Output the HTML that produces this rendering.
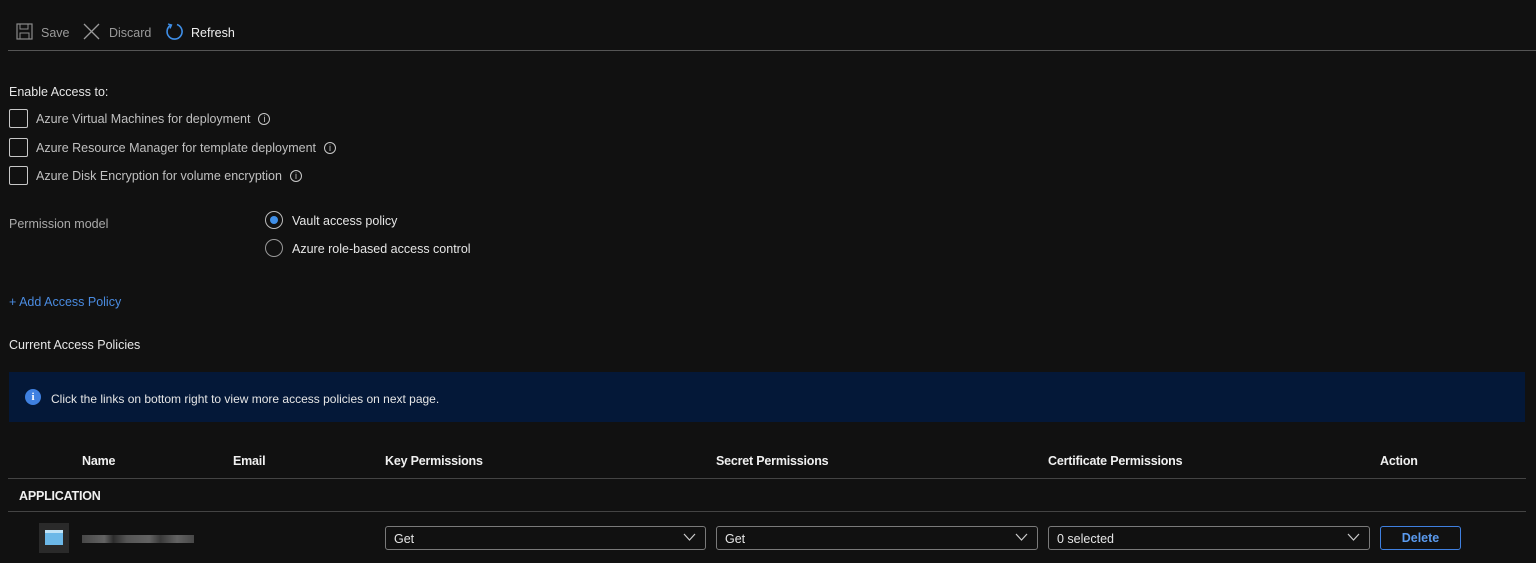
<!DOCTYPE html>
<html><head><meta charset="utf-8"><style>
*{margin:0;padding:0;box-sizing:border-box}
body{width:1536px;height:563px;background:#111111;font-family:"Liberation Sans",sans-serif;color:#e6e6e6;font-size:12.5px;position:relative;overflow:hidden}
.a{position:absolute;white-space:nowrap}
.cb{position:absolute;left:9px;width:19px;height:19px;border:1px solid #c8c8c8;border-radius:2px}
.lbl{color:#c0c0c0}
.th{font-weight:bold;color:#f0f0f0;font-size:12.5px;letter-spacing:-0.2px}
.dd{position:absolute;top:526px;height:24px;border:1px solid #7a7a7a;border-radius:3px;padding:5px 8px;font-size:12.5px;color:#e6e6e6}
.dd svg{position:absolute;right:9px;top:6px}
.info{display:inline-block;width:12px;height:12px;border:1px solid #c8c8c8;border-radius:50%;vertical-align:middle;margin-left:8px;position:relative;top:-1px;font-size:9px;text-align:center;line-height:10px;color:#c8c8c8}
</style></head><body>
<svg class="a" style="left:16px;top:23px" width="17" height="17" viewBox="0 0 17 17"><rect x="1" y="1" width="15" height="15" fill="none" stroke="#8a8a8a" stroke-width="1.2"/><rect x="4" y="1" width="8" height="5" fill="none" stroke="#8a8a8a"/><rect x="4" y="10" width="9" height="6" fill="none" stroke="#8a8a8a"/></svg>
<div class="a" style="left:41px;top:26px;color:#9a9a9a">Save</div>
<svg class="a" style="left:83px;top:23px" width="17" height="17"><path d="M1 1L16 16M16 1L1 16" stroke="#9a9a9a" stroke-width="1.3"/></svg>
<div class="a" style="left:109px;top:26px;color:#9a9a9a">Discard</div>
<svg class="a" style="left:165px;top:22px" width="19" height="19" viewBox="0 0 19 19"><path d="M6 3A7.5 7.5 0 1 0 12 2.5" fill="none" stroke="#3f8fe8" stroke-width="1.6"/><path d="M3 2L6.5 3L5 6.5" fill="none" stroke="#3f8fe8" stroke-width="1.4"/></svg>
<div class="a" style="left:191px;top:26px;color:#f0f0f0">Refresh</div>
<div class="a" style="left:8px;top:50px;width:1528px;height:1px;background:#555"></div>

<div class="a" style="left:9px;top:85px">Enable Access to:</div>
<div class="cb" style="top:109px"></div><div class="a lbl" style="left:36px;top:112px">Azure Virtual Machines for deployment<span class="info">i</span></div>
<div class="cb" style="top:138px"></div><div class="a lbl" style="left:36px;top:141px">Azure Resource Manager for template deployment<span class="info">i</span></div>
<div class="cb" style="top:166px"></div><div class="a lbl" style="left:36px;top:169px">Azure Disk Encryption for volume encryption<span class="info">i</span></div>

<div class="a lbl" style="left:9px;top:217px;color:#aaa">Permission model</div>
<div class="a" style="left:265px;top:211px;width:18px;height:18px;border:1px solid #bbb;border-radius:50%"><div style="position:absolute;left:4px;top:4px;width:8px;height:8px;border-radius:50%;background:#3f8fe8"></div></div>
<div class="a" style="left:292px;top:214px">Vault access policy</div>
<div class="a" style="left:265px;top:239px;width:18px;height:18px;border:1px solid #999;border-radius:50%"></div>
<div class="a" style="left:292px;top:242px">Azure role-based access control</div>

<div class="a" style="left:9px;top:295px;color:#4a8be0">+ Add Access Policy</div>
<div class="a" style="left:9px;top:338px">Current Access Policies</div>

<div class="a" style="left:9px;top:372px;width:1516px;height:50px;background:#041838"></div>
<div class="a" style="left:25px;top:389px;width:16px;height:16px;border-radius:50%;background:#3f80e0;color:#fff;font-weight:bold;font-size:11px;text-align:center;line-height:16px;font-family:'Liberation Serif',serif">i</div>
<div class="a" style="left:51px;top:392px;font-size:12px;color:#e6e6e6">Click the links on bottom right to view more access policies on next page.</div>

<div class="a th" style="left:82px;top:454px">Name</div>
<div class="a th" style="left:233px;top:454px">Email</div>
<div class="a th" style="left:385px;top:454px">Key Permissions</div>
<div class="a th" style="left:716px;top:454px">Secret Permissions</div>
<div class="a th" style="left:1048px;top:454px">Certificate Permissions</div>
<div class="a th" style="left:1380px;top:454px">Action</div>
<div class="a" style="left:8px;top:478px;width:1518px;height:1px;background:#444"></div>
<div class="a th" style="left:19px;top:489px">APPLICATION</div>
<div class="a" style="left:8px;top:511px;width:1518px;height:1px;background:#444"></div>

<div class="a" style="left:39px;top:523px;width:30px;height:30px;background:#2a2a2a"><div style="position:absolute;left:6px;top:7px;width:18px;height:15px;background:#6cb8e8;border-top:3px solid #bfe2f6"></div></div>
<div class="a" style="left:82px;top:535px;width:112px;height:8px;background:linear-gradient(90deg,#555 0,#777 20%,#333 28%,#666 40%,#777 60%,#444 70%,#777 85%,#555);opacity:.8"></div>

<div class="dd" style="left:385px;width:321px">Get<svg width="13" height="9"><path d="M1 1L6.5 7L12 1" fill="none" stroke="#ccc" stroke-width="1.2"/></svg></div>
<div class="dd" style="left:716px;width:322px">Get<svg width="13" height="9"><path d="M1 1L6.5 7L12 1" fill="none" stroke="#ccc" stroke-width="1.2"/></svg></div>
<div class="dd" style="left:1048px;width:322px">0 selected<svg width="13" height="9"><path d="M1 1L6.5 7L12 1" fill="none" stroke="#ccc" stroke-width="1.2"/></svg></div>
<div class="a" style="left:1380px;top:526px;width:81px;height:24px;border:1px solid #3f80e0;border-radius:3px;color:#5a9aee;text-align:center;line-height:23px;font-weight:bold">Delete</div>
</body></html>
